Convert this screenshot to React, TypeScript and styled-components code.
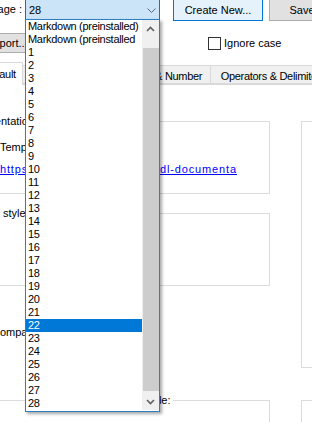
import styled, { createGlobalStyle } from 'styled-components';

const GlobalStyle = createGlobalStyle`
  html, body {
    margin: 0;
    padding: 0;
    background: #ffffff;
    overflow: hidden;
  }
  body {
    width: 312px;
    height: 422px;
    font-family: 'Liberation Sans', Arial, sans-serif;
    font-size: 11px;
    color: #000;
  }
`;

const Dialog = styled.div`
  display: flex;
  flex-direction: column;
  width: 760px;
  margin-left: -70px;
`;

const TopRow = styled.div`
  display: flex;
  align-items: flex-end;
  height: 23px;
  margin-top: -2px;
`;

const FieldLabel = styled.div`
  width: 92px;
  align-self: center;
  text-align: right;
  white-space: nowrap;
  line-height: 13px;
`;

const Combo = styled.div`
  position: relative;
  box-sizing: border-box;
  width: 135px;
  height: 22px;
  margin-left: 3px;
  padding-left: 3px;
  display: flex;
  align-items: center;
  justify-content: space-between;
  border: 1px solid #0078d7;
  background: #cce4f7;
`;

const ComboArrow = styled.svg`
  width: 9px;
  height: 5px;
  margin-right: 3px;
`;

const Button = styled.div<{ $focused?: boolean; $gap: number; $w?: number }>`
  box-sizing: border-box;
  width: ${(p) => p.$w ?? 90}px;
  height: 23px;
  margin-left: ${(p) => p.$gap}px;
  display: flex;
  align-items: center;
  justify-content: center;
  flex-shrink: 0;
  white-space: nowrap;
  border: 1px solid ${(p) => (p.$focused ? '#0078d7' : '#adadad')};
  background: ${(p) => (p.$focused ? '#e5f1fb' : '#e1e1e1')};
`;

const SecondRow = styled.div`
  display: flex;
  align-items: center;
  height: 20px;
  margin-top: 12px;
`;

const SmallButton = styled(Button)`
  height: 20px;
`;

const CheckRow = styled.label<{ $gap: number }>`
  display: flex;
  align-items: center;
  gap: 3px;
  margin-left: ${(p) => p.$gap}px;
  white-space: nowrap;
  line-height: 13px;
`;

const CheckBox = styled.span`
  box-sizing: border-box;
  width: 13px;
  height: 13px;
  border: 1px solid #333333;
  background: #ffffff;
  flex-shrink: 0;
`;

const TabStrip = styled.div`
  display: flex;
  align-items: flex-end;
  height: 22px;
  margin-top: 9px;
  padding-left: 5px;
`;

const Tab = styled.div<{ $active?: boolean; $w: number }>`
  position: relative;
  z-index: ${(p) => (p.$active ? 1 : 0)};
  box-sizing: border-box;
  width: ${(p) => p.$w}px;
  height: ${(p) => (p.$active ? 23 : 19)}px;
  margin-bottom: ${(p) => (p.$active ? -1 : 0)}px;
  padding-top: ${(p) => (p.$active ? 0 : 2)}px;
  display: flex;
  align-items: center;
  justify-content: center;
  white-space: nowrap;
  overflow: hidden;
  border: 1px solid #d9d9d9;
  border-bottom: ${(p) => (p.$active ? 'none' : '1px solid #d9d9d9')};
  margin-left: -1px;
  background: ${(p) => (p.$active ? '#ffffff' : '#f0f0f0')};
  letter-spacing: -0.3px;
`;

const Panel = styled.div`
  display: grid;
  grid-template-columns: 330px 330px;
  column-gap: 31px;
  padding-left: 9px;
  height: 600px;
  border: 1px solid #d9d9d9;
  background: #ffffff;
`;

const Column = styled.div`
  display: flex;
  flex-direction: column;
`;

const GroupBox = styled.div<{ $top: number; $h: number }>`
  position: relative;
  box-sizing: border-box;
  margin-top: ${(p) => p.$top}px;
  height: ${(p) => p.$h}px;
  border: 1px solid #dcdcdc;
  flex-shrink: 0;
`;

const GroupTitle = styled.span<{ $left: number }>`
  position: absolute;
  top: -7px;
  left: ${(p) => p.$left}px;
  padding: 0 2px;
  line-height: 13px;
  white-space: nowrap;
  background: #ffffff;
`;

const BoxBody = styled.div`
  display: flex;
  flex-direction: column;
  padding: 19px 0 0 59px;
`;

const StaticText = styled.div`
  line-height: 13px;
  white-space: nowrap;
`;

const LinkClip = styled.div`
  width: 237px;
  margin-top: 9px;
  overflow: hidden;
  white-space: nowrap;
  line-height: 13px;
`;

const DocLink = styled.a`
  color: #0000ff;
  text-decoration: underline;
  letter-spacing: 0.85px;
`;

const FoldRow = styled.div`
  display: flex;
  align-items: center;
  gap: 4px;
  margin-top: 40px;
  padding-left: 13px;
  line-height: 13px;
  white-space: nowrap;
`;

/* the open drop-down of the language combo */
const DropList = styled.div`
  position: absolute;
  z-index: 10;
  left: -1px;
  top: calc(100% - 1px);
  box-sizing: border-box;
  width: 135px;
  display: flex;
  padding-bottom: 1px;
  border: 1px solid #2f7fbf;
  background: #ffffff;
  box-shadow: 2px 2px 3px rgba(0, 0, 0, 0.35);
`;

const Items = styled.div`
  width: 116px;
  display: flex;
  flex-direction: column;
`;

const Item = styled.div<{ $active?: boolean }>`
  height: 13px;
  line-height: 13px;
  padding-left: 2px;
  white-space: nowrap;
  overflow: hidden;
  letter-spacing: -0.3px;
  color: ${(p) => (p.$active ? '#ffffff' : '#000000')};
  background: ${(p) => (p.$active ? '#0078d7' : 'transparent')};
`;

const ScrollBar = styled.div`
  width: 17px;
  display: flex;
  flex-direction: column;
  background: #f0f0f0;
`;

const ScrollButton = styled.div`
  height: 17px;
  display: flex;
  align-items: center;
  justify-content: center;
  flex-shrink: 0;
`;

const ScrollTrack = styled.div`
  flex: 1;
  display: flex;
  padding: 11px 0 2px 1px;
`;

const Thumb = styled.div`
  flex: 1;
  background: #cdcdcd;
`;

const items = [
  'Markdown (preinstalled)',
  'Markdown (preinstalled',
  ...Array.from({ length: 28 }, (_, i) => String(i + 1)),
];

function Chevron({ up }: { up?: boolean }) {
  return (
    <svg width="9" height="6" viewBox="0 0 9 6">
      <polyline
        points={up ? '1,5 4.5,1.5 8,5' : '1,1 4.5,4.5 8,1'}
        fill="none"
        stroke="#606060"
        strokeWidth="1.6"
      />
    </svg>
  );
}

export default function App() {
  return (
    <>
      <GlobalStyle />
      <Dialog>
        <TopRow>
          <FieldLabel>User language :</FieldLabel>
          <Combo>
            <span>28</span>
            <ComboArrow viewBox="0 0 9 5">
              <polyline points="0.5,0.5 4.5,4.5 8.5,0.5" fill="none" stroke="#5c6670" strokeWidth="1" />
            </ComboArrow>
            <DropList>
              <Items>
                {items.map((label, idx) => (
                  <Item key={idx} $active={label === '22'}>
                    {label}
                  </Item>
                ))}
              </Items>
              <ScrollBar>
                <ScrollButton>
                  <Chevron up />
                </ScrollButton>
                <ScrollTrack>
                  <Thumb />
                </ScrollTrack>
                <ScrollButton>
                  <Chevron />
                </ScrollButton>
              </ScrollBar>
            </DropList>
          </Combo>
          <Button $focused $gap={13}>
            Create New...
          </Button>
          <Button $gap={6}>Save as...</Button>
        </TopRow>

        <SecondRow>
          <SmallButton $gap={40} $w={75}>
            Import...
          </SmallButton>
          <SmallButton $gap={5} $w={75}>
            Export...
          </SmallButton>
          <CheckRow $gap={83}>
            <CheckBox />
            Ignore case
          </CheckRow>
        </SecondRow>

        <TabStrip>
          <Tab $active $w={89}>
            Folder &amp; Default
          </Tab>
          <Tab $w={77}>Keywords Lists</Tab>
          <Tab $w={113}>Comment &amp; Number</Tab>
          <Tab $w={126}>Operators &amp; Delimiters</Tab>
        </TabStrip>

        <Panel>
          <Column>
            <GroupBox $top={36} $h={73}>
              <GroupTitle $left={17}>Documentation</GroupTitle>
              <BoxBody>
                <StaticText>Temporary doc site:</StaticText>
                <LinkClip>
                  <DocLink>https://ivan-radic.github.io/udl-documentation/</DocLink>
                </LinkClip>
              </BoxBody>
            </GroupBox>
            <GroupBox $top={19} $h={73}>
              <GroupTitle $left={22}>Default style</GroupTitle>
            </GroupBox>
            <FoldRow>
              <CheckBox />
              Fold compact (fold empty lines too)
            </FoldRow>
            <GroupBox $top={61} $h={200}>
              <GroupTitle $left={115}>Folding in code 1 style:</GroupTitle>
            </GroupBox>
          </Column>
          <Column>
            <GroupBox $top={36} $h={247}>
              <GroupTitle $left={15}>Folding in code 2 style (separators needed):</GroupTitle>
            </GroupBox>
            <GroupBox $top={32} $h={200}>
              <GroupTitle $left={15}>Folding in comment style:</GroupTitle>
            </GroupBox>
          </Column>
        </Panel>
      </Dialog>
    </>
  );
}
